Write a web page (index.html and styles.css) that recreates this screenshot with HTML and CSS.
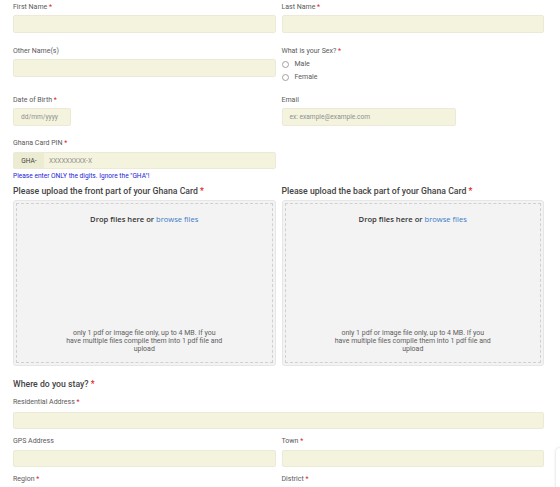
FILE: index.html
```html
<!DOCTYPE html>
<html>
<head>
<meta charset="utf-8">
<link rel="stylesheet" href="styles.css">
</head>
<body>
<form class="form">
  <div class="row r1">
    <div class="field">
      <label class="lbl">First Name <span class="req">*</span></label>
      <div class="input"></div>
    </div>
    <div class="field">
      <label class="lbl">Last Name <span class="req">*</span></label>
      <div class="input"></div>
    </div>
  </div>
  <div class="row r2">
    <div class="field">
      <label class="lbl">Other Name(s)</label>
      <div class="input"></div>
    </div>
    <div class="field">
      <label class="lbl">What is your Sex? <span class="req">*</span></label>
      <div class="radios">
        <div class="radio"><span class="circle"></span><span>Male</span></div>
        <div class="radio"><span class="circle"></span><span>Female</span></div>
      </div>
    </div>
  </div>
  <div class="row r3">
    <div class="field">
      <label class="lbl">Date of Birth <span class="req">*</span></label>
      <div class="input date"><span class="ph">dd/mm/yyyy</span></div>
    </div>
    <div class="field">
      <label class="lbl">Email</label>
      <div class="input email"><span class="ph">ex: example@example.com</span></div>
    </div>
  </div>
  <div class="row r4">
    <div class="field">
      <label class="lbl">Ghana Card PIN <span class="req">*</span></label>
      <div class="input pin"><span class="prefix">GHA-</span><span class="ph pinph">XXXXXXXXX-X</span></div>
      <div class="hint">Please enter ONLY the digits. Ignore the "GHA"!</div>
    </div>
    <div class="field"></div>
  </div>
  <div class="row r5">
    <div class="field">
      <h3 class="heading">Please upload the front part of your Ghana Card <span class="req">*</span></h3>
      <div class="drop">
        <div class="drop-title"><b>Drop files here or</b> <span class="browse">browse files</span></div>
        <div class="drop-note">only 1 pdf or image file only, up to 4 MB. If you<br>have multiple files compile them into 1 pdf file and<br>upload</div>
      </div>
    </div>
    <div class="field">
      <h3 class="heading">Please upload the back part of your Ghana Card <span class="req">*</span></h3>
      <div class="drop">
        <div class="drop-title"><b>Drop files here or</b> <span class="browse">browse files</span></div>
        <div class="drop-note">only 1 pdf or image file only, up to 4 MB. If you<br>have multiple files compile them into 1 pdf file and<br>upload</div>
      </div>
    </div>
  </div>
  <h3 class="heading stay">Where do you stay? <span class="req">*</span></h3>
  <div class="field full">
    <label class="lbl">Residential Address <span class="req">*</span></label>
    <div class="input"></div>
  </div>
  <div class="row r7">
    <div class="field">
      <label class="lbl">GPS Address</label>
      <div class="input"></div>
    </div>
    <div class="field">
      <label class="lbl">Town <span class="req">*</span></label>
      <div class="input"></div>
    </div>
  </div>
  <div class="row r8">
    <div class="field">
      <label class="lbl">Region <span class="req">*</span></label>
    </div>
    <div class="field">
      <label class="lbl">District <span class="req">*</span></label>
    </div>
  </div>
</form>
<div class="floater"></div>
</body>
</html>
```

FILE: styles.css
```css
html, body {
  margin: 0;
  padding: 0;
  background: #ffffff;
  overflow: hidden;
}
body {
  width: 560px;
  height: 487px;
  position: relative;
  font-family: Roboto, "Liberation Sans", sans-serif;
  color: #555;
}
.form {
  padding: 2px 16px 0 13px;
  width: 531px;
}
.row {
  display: grid;
  grid-template-columns: 1fr 1fr;
  column-gap: 6px;
  align-items: start;
}
.field {
  display: flex;
  flex-direction: column;
  min-width: 0;
}
.lbl {
  font-size: 7px;
  line-height: 10px;
  height: 10px;
  color: #5a5a5a;
}
.req {
  color: #e02020;
}
.input {
  margin-top: 3px;
  height: 16px;
  background: #f4f4de;
  border: 1px solid #ecead6;
  border-radius: 2px;
  box-sizing: content-box;
  display: flex;
  align-items: center;
}
.ph {
  font-size: 6.6px;
  color: #8f8f8f;
  padding-left: 7px;
}
.r2 { margin-top: 13px; }
.r3 { margin-top: 13px; }
.r3 .input { margin-top: 3px; }
.r4 { margin-top: 12px; }
.r4 .input { margin-top: 4px; height: 15px; }
.date { width: 56px; }
.email { width: 172px; }
.radios {
  margin-top: 3px;
  display: flex;
  flex-direction: column;
  gap: 3px;
}
.radio {
  display: flex;
  align-items: center;
  height: 10px;
  font-size: 7px;
  color: #5a5a5a;
}
.circle {
  width: 5px;
  height: 5px;
  border: 1px solid #a0a0a0;
  border-radius: 50%;
  margin-right: 6px;
  background: #fff;
}
.pin {
  align-items: stretch;
}
.prefix {
  width: 30px;
  background: #ececd3;
  font-size: 6.6px;
  color: #444;
  display: flex;
  align-items: center;
  justify-content: center;
  padding-top: 1px;
}
.pinph {
  display: flex;
  align-items: center;
  padding-left: 5px;
}
.hint {
  font-size: 6.6px;
  line-height: 10px;
  color: #2323d8;
  margin-top: 2px;
  white-space: nowrap;
}
.r5 { margin-top: 4px; }
.heading {
  margin: 0;
  font-size: 8.7px;
  line-height: 12px;
  font-weight: 500;
  color: #444;
  white-space: nowrap;
}
.drop {
  margin-top: 3px;
  background: #f3f3f3;
  border: 1px solid #e6e6e6;
  border-radius: 3px;
  outline: 1px dashed #d0d0d0;
  outline-offset: -4px;
  display: flex;
  flex-direction: column;
  align-items: center;
  justify-content: space-between;
  padding: 13px 0 12px;
  box-sizing: content-box;
  height: 139px;
}
.drop-title {
  font-size: 7.6px;
  line-height: 10px;
  color: #333;
  font-family: "Open Sans", Roboto, sans-serif;
}
.drop-title b {
  font-weight: 600;
}
.browse {
  color: #3a7bc8;
}
.drop-note {
  text-align: center;
  font-size: 7px;
  line-height: 8px;
  color: #5e5e5e;
  white-space: nowrap;
}
.stay {
  margin-top: 12px;
}
.full { margin-top: 7px; }
.full .input { margin-top: 5px; height: 15px; }
.r7 { margin-top: 7px; }
.r7 .input { margin-top: 4px; height: 15px; }
.r8 { margin-top: 7px; }
.floater {
  position: absolute;
  left: 556px;
  top: 448px;
  width: 30px;
  height: 60px;
  background: #fff;
  border-radius: 4px;
  box-shadow: 0 0 3px rgba(0,0,0,0.18);
}
```
